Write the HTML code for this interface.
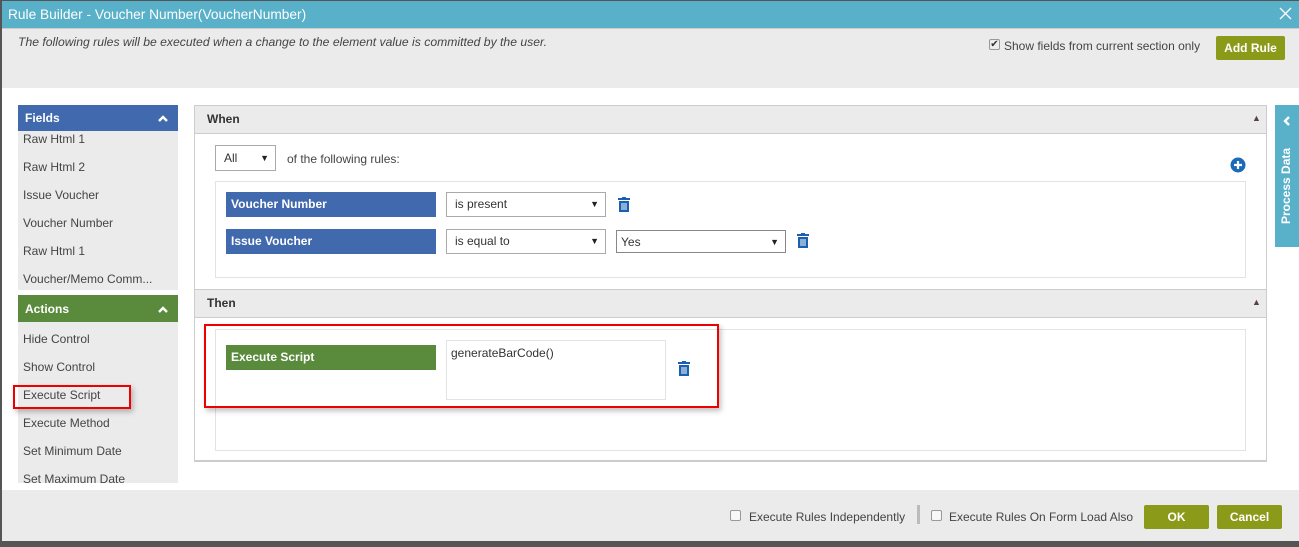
<!DOCTYPE html>
<html><head><style>
*{box-sizing:border-box;margin:0;padding:0}
body{width:1299px;height:547px;position:relative;overflow:hidden;background:#555;font-family:"Liberation Sans",sans-serif;font-size:12px;color:#333}
.a{position:absolute}
.dlg{left:2px;top:1px;width:1297px;height:540px;background:#fff}
.title{left:2px;top:1px;width:1297px;height:27px;background:#58b0c9}
.item{left:23px;font-size:12px;color:#444}
.lbl{color:#fff;font-weight:bold;font-size:12px;line-height:25px;padding-left:5px}
.sel{background:#fff;border:1px solid #aaa;font-size:12px;line-height:23px;padding-left:8px}
.sel:after{content:"▼";position:absolute;right:6px;top:0;font-size:9px;color:#222}
.btn{background:#8c9a1a;color:#fff;font-weight:bold;font-size:12px;text-align:center;border-radius:2px}
.cb{width:11px;height:11px;border:1px solid #999;border-radius:2px;background:#f8f8f8}
</style></head><body>
<div class="a dlg"></div>
<div class="a title"></div>
<div class="a" style="left:8px;top:6px;color:#fff;font-size:14px;white-space:nowrap;transform:scaleX(0.98);transform-origin:0 0">Rule Builder - Voucher Number(VoucherNumber)</div>
<svg class="a" style="left:1279px;top:7px" width="13" height="13"><path d="M1 1L12 12M12 1L1 12" stroke="#fff" stroke-width="1.3"/></svg>
<div class="a" style="left:2px;top:28px;width:1297px;height:60px;background:#ebebeb;border-top:1px solid #ccc"></div>
<div class="a" style="left:18px;top:35px;font-style:italic;font-size:12px;color:#444;white-space:nowrap;transform:scaleX(1.015);transform-origin:0 0">The following rules will be executed when a change to the element value is committed by the user.</div>
<div class="a cb" style="left:989px;top:39px;background:#eee;font-size:10px;line-height:9px;text-align:center">✔</div>
<div class="a" style="left:1004px;top:39px;font-size:12px;color:#444">Show fields from current section only</div>
<div class="a btn" style="left:1216px;top:36px;width:69px;height:24px;line-height:24px">Add Rule</div>

<div class="a" style="left:18px;top:105px;width:160px;height:26px;background:#4169ad"></div>
<div class="a lbl" style="left:20px;top:105px;line-height:26px">Fields</div>
<svg class="a" style="left:157px;top:114px" width="12" height="9"><path d="M2 7L6 3L10 7" stroke="#fff" stroke-width="2.4" fill="none"/></svg>
<div class="a" style="left:18px;top:131px;width:160px;height:159px;background:#ebebeb"></div>
<div class="a item" style="top:132px">Raw Html 1</div>
<div class="a item" style="top:160px">Raw Html 2</div>
<div class="a item" style="top:188px">Issue Voucher</div>
<div class="a item" style="top:216px">Voucher Number</div>
<div class="a item" style="top:244px">Raw Html 1</div>
<div class="a item" style="top:272px">Voucher/Memo Comm...</div>
<div class="a" style="left:18px;top:295px;width:160px;height:27px;background:#5a8a3c"></div>
<div class="a lbl" style="left:20px;top:296px;line-height:26px">Actions</div>
<svg class="a" style="left:157px;top:305px" width="12" height="9"><path d="M2 7L6 3L10 7" stroke="#fff" stroke-width="2.4" fill="none"/></svg>
<div class="a" style="left:18px;top:322px;width:160px;height:161px;background:#ebebeb"></div>
<div class="a item" style="top:332px">Hide Control</div>
<div class="a item" style="top:360px">Show Control</div>
<div class="a item" style="top:388px">Execute Script</div>
<div class="a item" style="top:416px">Execute Method</div>
<div class="a item" style="top:444px">Set Minimum Date</div>
<div class="a item" style="top:472px">Set Maximum Date</div>
<div class="a" style="left:13px;top:385px;width:118px;height:24px;border:2px solid #e00;box-shadow:2px 3px 5px rgba(0,0,0,.25)"></div>

<div class="a" style="left:194px;top:105px;width:1073px;height:357px;border:1px solid #ccc;border-bottom:2px solid #ccc"></div>
<div class="a" style="left:195px;top:106px;width:1071px;height:28px;background:#ebebeb;border-bottom:1px solid #ccc;font-weight:bold;line-height:27px;padding-left:12px">When</div>
<div class="a" style="left:1252px;top:113px;font-size:9px;color:#5a4040">▲</div>
<div class="a sel" style="left:215px;top:145px;width:61px;height:26px;line-height:24px">All</div>
<div class="a" style="left:287px;top:152px;color:#444">of the following rules:</div>
<svg class="a" style="left:1230px;top:157px" width="16" height="16"><circle cx="8" cy="8" r="7.5" fill="#1a6bb8"/><path d="M8 4v8M4 8h8" stroke="#fff" stroke-width="2.2"/></svg>
<div class="a" style="left:215px;top:181px;width:1031px;height:97px;border:1px solid #e3e3e3"></div>
<div class="a lbl" style="left:226px;top:192px;width:210px;background:#4169ad">Voucher Number</div>
<div class="a sel" style="left:446px;top:192px;width:160px;height:25px">is present</div>
<div class="a lbl" style="left:226px;top:229px;width:210px;background:#4169ad">Issue Voucher</div>
<div class="a sel" style="left:446px;top:229px;width:160px;height:25px">is equal to</div>
<div class="a sel" style="left:616px;top:230px;width:170px;height:23px;border-color:#888;line-height:22px;padding-left:4px">Yes</div>
<svg class="a" style="left:617px;top:197px" width="14" height="16" viewBox="0 0 14 16"><path d="M1 2h12M5 1h4" stroke="#1a5fb0" stroke-width="2"/><path d="M2 4h10v11H2z" fill="#1a5fb0"/><path d="M5 6v7M7 6v7M9 6v7" stroke="#fff" stroke-width="1"/></svg>
<svg class="a" style="left:796px;top:233px" width="14" height="16" viewBox="0 0 14 16"><path d="M1 2h12M5 1h4" stroke="#1a5fb0" stroke-width="2"/><path d="M2 4h10v11H2z" fill="#1a5fb0"/><path d="M5 6v7M7 6v7M9 6v7" stroke="#fff" stroke-width="1"/></svg>

<div class="a" style="left:195px;top:289px;width:1071px;height:29px;background:#ebebeb;border-top:1px solid #ccc;border-bottom:1px solid #ccc;font-weight:bold;line-height:27px;padding-left:12px">Then</div>
<div class="a" style="left:1252px;top:297px;font-size:9px;color:#5a4040">▲</div>
<div class="a" style="left:215px;top:329px;width:1031px;height:122px;border:1px solid #e3e3e3"></div>
<div class="a lbl" style="left:226px;top:345px;width:210px;background:#5a8a3c">Execute Script</div>
<div class="a" style="left:446px;top:340px;width:220px;height:60px;border:1px solid #e3e3e3;padding:5px 4px">generateBarCode()</div>
<svg class="a" style="left:677px;top:361px" width="14" height="16" viewBox="0 0 14 16"><path d="M1 2h12M5 1h4" stroke="#1a5fb0" stroke-width="2"/><path d="M2 4h10v11H2z" fill="#1a5fb0"/><path d="M5 6v7M7 6v7M9 6v7" stroke="#fff" stroke-width="1"/></svg>
<div class="a" style="left:204px;top:324px;width:515px;height:84px;border:2px solid #e00;box-shadow:2px 3px 5px rgba(0,0,0,.25)"></div>

<div class="a" style="left:1275px;top:105px;width:24px;height:142px;background:#58b0c9"></div>
<svg class="a" style="left:1282px;top:115px" width="10" height="12"><path d="M7 2L3 6L7 10" stroke="#fff" stroke-width="2.4" fill="none"/></svg>
<div class="a" style="left:1279px;top:224px;color:#fff;font-weight:bold;font-size:12px;transform:rotate(-90deg);transform-origin:0 0;white-space:nowrap">Process Data</div>

<div class="a" style="left:2px;top:490px;width:1297px;height:51px;background:#ebebeb"></div>
<div class="a cb" style="left:730px;top:510px"></div>
<div class="a" style="left:749px;top:510px;color:#444">Execute Rules Independently</div>
<div class="a" style="left:917px;top:505px;width:3px;height:19px;background:#bbb"></div>
<div class="a cb" style="left:931px;top:510px"></div>
<div class="a" style="left:949px;top:510px;color:#444">Execute Rules On Form Load Also</div>
<div class="a btn" style="left:1144px;top:505px;width:65px;height:24px;line-height:24px">OK</div>
<div class="a btn" style="left:1217px;top:505px;width:65px;height:24px;line-height:24px">Cancel</div>
</body></html>
